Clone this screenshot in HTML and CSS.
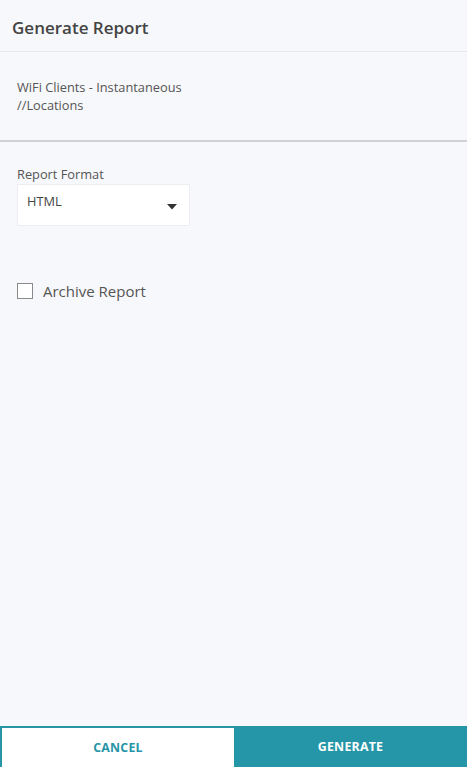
FILE: index.html
```html
<!DOCTYPE html>
<html>
<head>
<meta charset="utf-8">
<link rel="stylesheet" href="styles.css">
</head>
<body>
<div class="panel">
  <header class="header">Generate Report</header>
  <section class="info">
    <div class="info-line">WiFi Clients - Instantaneous</div>
    <div class="info-line">//Locations</div>
  </section>
  <section class="form">
    <label class="field-label">Report Format</label>
    <div class="select">
      <span class="select-value">HTML</span>
      <svg class="caret" width="10" height="6" viewBox="0 0 10 6"><path d="M0 0 L10 0 L5 5.5 Z" fill="#333"/></svg>
    </div>
    <label class="checkbox-row">
      <span class="checkbox"></span>
      <span class="checkbox-text">Archive Report</span>
    </label>
  </section>
  <footer class="footer">
    <button class="btn btn-cancel">CANCEL</button>
    <button class="btn btn-generate">GENERATE</button>
  </footer>
</div>
</body>
</html>
```
FILE: styles.css
```css
html, body {
  margin: 0;
  padding: 0;
  background: #f7f8fb;
  font-family: "Open Sans", "Liberation Sans", sans-serif;
}
.panel {
  height: 767px;
  display: flex;
  flex-direction: column;
  background: #f7f8fb;
}
.header {
  height: 52px;
  box-sizing: border-box;
  padding: 4px 0 0 12px;
  display: flex;
  align-items: center;
  font-size: 17px;
  font-weight: 600;
  color: #444;
  border-bottom: 1px solid #e6e8ec;
}
.info {
  padding: 26px 17px 0;
  height: 90px;
  box-sizing: border-box;
  border-bottom: 2px solid #cfd1d5;
}
.info-line {
  font-size: 12.8px;
  line-height: 18px;
  color: #555;
}
.form {
  flex: 1;
  padding: 23px 17px 0;
}
.field-label {
  display: block;
  font-size: 12.8px;
  line-height: 18px;
  color: #555;
  margin-bottom: 1px;
}
.select {
  width: 173px;
  height: 42px;
  box-sizing: border-box;
  background: #fff;
  border: 1px solid #eceef1;
  padding: 7px 9px 0 9px;
  display: flex;
  align-items: flex-start;
  justify-content: space-between;
}
.select-value {
  font-size: 12.8px;
  line-height: 18px;
  color: #444;
}
.caret {
  margin-top: 12px;
  margin-right: 3px;
}
.checkbox-row {
  display: flex;
  align-items: center;
  margin-top: 55px;
}
.checkbox {
  width: 14px;
  height: 14px;
  border: 1.5px solid #8a8a8a;
  background: #fff;
  margin-right: 10px;
}
.checkbox-text {
  font-size: 15px;
  line-height: 20px;
  color: #555;
}
.footer {
  display: flex;
  height: 41px;
}
.btn {
  height: 41px;
  box-sizing: border-box;
  font-family: "Open Sans", "Liberation Sans", sans-serif;
  font-size: 12.4px;
  font-weight: 700;
  letter-spacing: 0.2px;
  cursor: pointer;
  padding: 0;
  margin: 0;
}
.btn-cancel {
  width: 234px;
  flex: none;
  background: #fff;
  color: #2795a7;
  border: 2px solid #2795a7;
  border-right: none;
  border-bottom: none;
}
.btn-generate {
  flex: 1;
  background: #2596a8;
  color: #fff;
  border: none;
}
```
